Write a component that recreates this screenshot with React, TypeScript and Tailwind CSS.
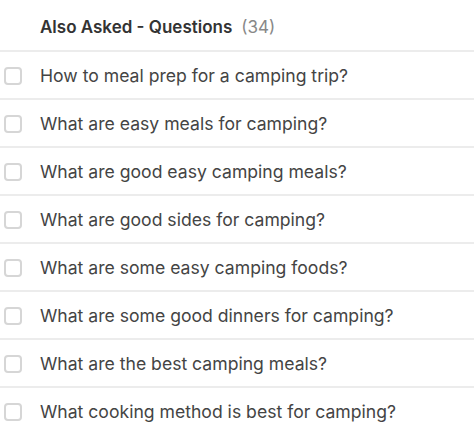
const questions = [
  'How to meal prep for a camping trip?',
  'What are easy meals for camping?',
  'What are good easy camping meals?',
  'What are good sides for camping?',
  'What are some easy camping foods?',
  'What are some good dinners for camping?',
  'What are the best camping meals?',
  'What cooking method is best for camping?',
];

export default function App() {
  return (
    <div className="h-[428px] w-[474px] overflow-hidden bg-white font-['Inter',sans-serif]">
      <div className="flex h-[52px] items-center border-b-2 border-[#ececec] pl-10 pt-[5px]">
        <span className="text-[17px] font-semibold text-[#333]">Also Asked - Questions</span>
        <span className="ml-[9px] text-[17px] text-[#888]">(34)</span>
      </div>
      <ul>
        {questions.map((q) => (
          <li key={q} className="flex h-[48px] items-center border-b-2 border-[#ececec] pt-[2px]">
            <span className="ml-[4px] h-[18px] w-[18px] rounded-[4px] border-2 border-[#d6d6d6]" />
            <span className="ml-[18px] text-[17.6px] text-[#444]">{q}</span>
          </li>
        ))}
      </ul>
    </div>
  );
}
